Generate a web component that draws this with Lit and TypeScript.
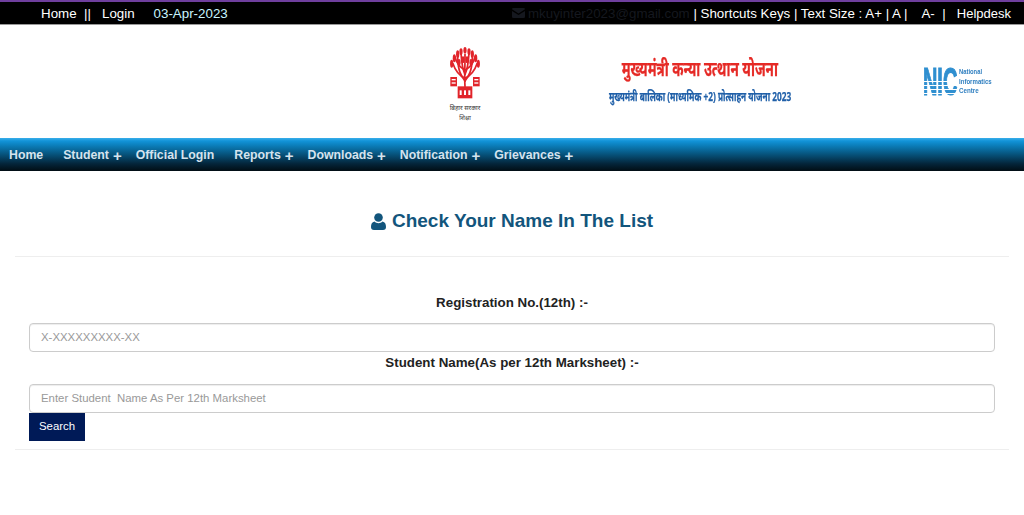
import { LitElement, html, css, svg } from "lit";
import { customElement } from "lit/decorators.js";

const menu: [string, boolean][] = [
  ["Home", false],
  ["Student", true],
  ["Official Login", false],
  ["Reports", true],
  ["Downloads", true],
  ["Notification", true],
  ["Grievances", true],
];

const branches = [
  "M24 60 C23 46 24 38 24 12",
  "M24 52 C18 44 14 38 13 18",
  "M24 52 C30 44 34 38 35 18",
  "M24 48 C16 44 10 38 6 26",
  "M24 48 C32 44 38 38 42 26",
  "M24 42 C20 34 19 26 18 10",
  "M24 42 C28 34 29 26 30 10",
  "M24 36 C18 32 12 28 9 16",
  "M24 36 C30 32 36 28 39 16",
];

const leaves: [number, number, number][] = [
  [24, 6, 5], [18, 8, 5], [30, 8, 5], [13, 12, 6], [35, 12, 6],
  [8, 18, 6], [40, 18, 6], [4, 26, 6], [44, 26, 6],
  [15, 24, 5], [33, 24, 5], [21, 20, 5], [27, 20, 5],
];

const nicLabels: [string, number, number][] = [
  ["National", 19, 0.73],
  ["Informatics", 29, 0.76],
  ["Centre", 38, 0.78],
];

@customElement("app-root")
export class AppRoot extends LitElement {
  static styles = css`
    :host { display: block; font-family: "Liberation Sans", Arial, sans-serif; background: #fff; min-height: 515px; color: #222; }
    .top { box-sizing: border-box; height: 25px; background: #000; border-top: 2px solid #6f3f9e; border-bottom: 1px solid #999; display: flex; align-items: center; justify-content: space-between; color: #fff; font-size: 13.33px; padding: 0 13px 0 41px; white-space: pre; }
    .top-left, .top-right { display: flex; align-items: center; }
    .date { color: #c8f4ff; margin-left: 19px; }
    .mail { color: #15181f; display: flex; align-items: center; gap: 3px; }
    .mail svg { width: 13px; height: 10px; fill: #15181f; }
    .hd { font-size: 13px; }
    .head { height: 113px; display: flex; }
    .emblem { width: 32px; margin: 21px 0 0 449px; display: flex; flex-direction: column; align-items: center; flex: none; }
    .tree { width: 32px; height: 54px; filter: blur(.35px); }
    .emblem span { font-family: "Noto Sans", sans-serif; font-size: 6.4px; line-height: 10px; color: #333; white-space: nowrap; margin-top: 3px; }
    .emblem .sub { font-size: 6px; line-height: 9px; margin-top: 1px; }
    .scheme { width: 200px; margin: 30px 0 0 119px; display: flex; flex-direction: column; align-items: center; flex: none; font-family: "Noto Sans", sans-serif; font-weight: 700; white-space: nowrap; }
    .scheme .a { color: #e52a26; font-size: 20px; line-height: 28px; transform: scaleX(.68); -webkit-text-stroke: .25px #e52a26; }
    .scheme .b { color: #1f5fa8; font-size: 12px; line-height: 16px; margin-top: 6px; transform: scaleX(.69); -webkit-text-stroke: .25px #1f5fa8; }
    .nic { margin: 30px 0 0 123px; width: 70px; height: 50px; flex: none; filter: blur(.3px); }
    .nic .big { font-family: "Liberation Sans", sans-serif; font-weight: 700; font-size: 39px; fill: #2f8fd0; stroke: #2f8fd0; stroke-width: 1.2px; }
    .nic .small { font-family: "Liberation Sans", sans-serif; font-weight: 700; font-size: 8px; fill: #2f7fc0; }
    .nic rect { fill: #fff; }
    nav { height: 33px; background: linear-gradient(#38aeea 0, #1293d8 3px, #0c82c0 20%, #075a86 45%, #04253a 78%, #010d14 100%); display: flex; align-items: center; color: #d5e3ee; font-weight: 700; font-size: 12.3px; padding-left: 9px; }
    nav a { display: flex; align-items: center; white-space: nowrap; margin-right: 20px; }
    nav a.plus { margin-right: 14px; }
    nav a i { font-style: normal; font-size: 15px; margin-left: 4px; margin-top: 2px; line-height: 12px; }
    .panel { margin: 0 15px; }
    .title { height: 86px; box-sizing: border-box; border-bottom: 1px solid #eee; display: flex; align-items: center; justify-content: center; gap: 6px; color: #12557c; font-size: 19px; font-weight: 700; padding-top: 15px; }
    .title svg { width: 15px; height: 17px; fill: #12557c; }
    form { padding: 0 14px; }
    label { display: block; text-align: center; font-size: 13.33px; font-weight: 700; color: #222; }
    .l1 { margin-top: 38px; height: 28px; line-height: 16px; }
    .l2 { height: 32px; line-height: 22px; }
    input { display: block; box-sizing: border-box; width: 100%; height: 29px; padding: 0 11px 1px; border: 1px solid #ccc; border-radius: 4px; font: 11.4px "Liberation Sans", Arial, sans-serif; box-shadow: inset 0 1px 1px rgba(0,0,0,.075); background: #fff; outline: none; }
    input::placeholder { color: #999; opacity: 1; }
    button { display: block; width: 56px; height: 28px; background: #001a57; color: #fff; border: 0; padding: 0 0 2px; font: 11.4px "Liberation Sans", Arial, sans-serif; }
    .foot { border-bottom: 1px solid #eee; height: 8px; }
  `;

  private tree() {
    return svg`
      <svg class="tree" viewBox="0 0 48 80">
        <g fill="none" stroke="#e1242a" stroke-width="2.6" stroke-linecap="round">
          ${branches.map((d) => svg`<path d=${d}></path>`)}
        </g>
        <g fill="#e1242a">
          ${leaves.map(([x, y, r]) => svg`<ellipse cx=${x} cy=${y} rx="2.4" ry=${r}></ellipse>`)}
          <rect x="2" y="46" width="10" height="14"></rect>
          <rect x="36" y="46" width="10" height="14"></rect>
          <rect x="13" y="60" width="22" height="18"></rect>
        </g>
        <g fill="#fff">
          <rect x="16" y="66" width="3" height="7"></rect>
          <rect x="22.500" y="66" width="3" height="7"></rect>
          <rect x="29" y="66" width="3" height="7"></rect>
          <rect x="4" y="49" width="6" height="2"></rect>
          <rect x="38" y="49" width="6" height="2"></rect>
          <rect x="4" y="54" width="6" height="2"></rect>
          <rect x="38" y="54" width="6" height="2"></rect>
        </g>
      </svg>`;
  }

  private nic() {
    return svg`
      <svg class="nic" viewBox="0 0 70 50">
        <text class="big" transform="translate(0 40) scale(.51 1)">NIC</text>
        <rect x="0" y="26" width="35" height="1"></rect>
        <rect x="0" y="30" width="35" height="1"></rect>
        <rect x="0" y="34" width="35" height="1"></rect>
        <rect x="0" y="38" width="35" height="1"></rect>
        ${nicLabels.map(([t, y, s]) => svg`<text class="small" transform="translate(36 ${y}) scale(${s} 1)">${t}</text>`)}
      </svg>`;
  }

  render() {
    return html`
      <div class="top">
        <div class="top-left"><span>Home  ||   Login</span><span class="date">03-Apr-2023</span></div>
        <div class="top-right">
          <span class="mail"><svg viewBox="0 0 13 10"><path d="M0 1.300A1.300 1.300 0 0 1 1.300 0h10.400A1.300 1.300 0 0 1 13 1.300L6.500 5.500 0 1.300zM0 2.900V8.700A1.300 1.300 0 0 0 1.300 10h10.400A1.300 1.300 0 0 0 13 8.700V2.900L6.500 7 0 2.900z"></path></svg>mkuyinter2023@gmail.com</span>
          <span> | Shortcuts Keys | Text Size : A+ | A |    A-  |   <span class="hd">Helpdesk</span></span>
        </div>
      </div>
      <div class="head">
        <div class="emblem">${this.tree()}<span>बिहार सरकार</span><span class="sub">शिक्षा</span></div>
        <div class="scheme">
          <div class="a">मुख्यमंत्री कन्या उत्थान योजना</div>
          <div class="b">मुख्यमंत्री बालिका (माध्यमिक +2) प्रोत्साहन योजना 2023</div>
        </div>
        ${this.nic()}
      </div>
      <nav>
        ${menu.map(([t, p]) => html`<a class=${p ? "plus" : ""}>${t}${p ? html`<i>+</i>` : ""}</a>`)}
      </nav>
      <div class="panel">
        <div class="title"><svg viewBox="0 0 15 17"><circle cx="7.500" cy="4.500" r="4.300"></circle><path d="M3.500 8.500C1 9 0 11 0 14c0 2 1 3 3 3h9c2 0 3-1 3-3 0-3-1-5-3.500-5.500-1 1-2.500 1.700-4 1.700s-3-.7-4-1.700z"></path></svg>Check Your Name In The List</div>
        <form>
          <label class="l1">Registration No.(12th) :-</label>
          <input placeholder="X-XXXXXXXXX-XX" />
          <label class="l2">Student Name(As per 12th Marksheet) :-</label>
          <input placeholder="Enter Student  Name As Per 12th Marksheet" />
          <button type="button">Search</button>
        </form>
        <div class="foot"></div>
      </div>
    `;
  }
}
